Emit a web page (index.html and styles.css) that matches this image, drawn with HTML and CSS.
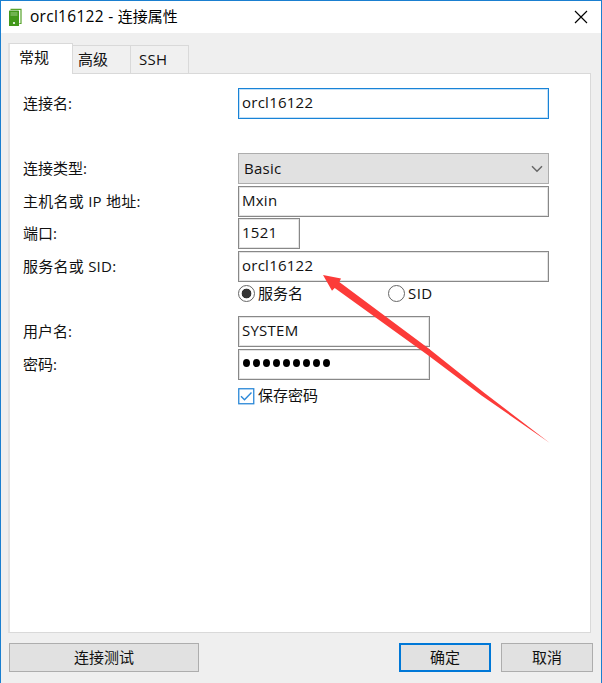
FILE: index.html
```html
<!DOCTYPE html>
<html lang="zh-CN">
<head>
<meta charset="utf-8">
<title>orcl16122 - 连接属性</title>
<link rel="stylesheet" href="styles.css">
</head>
<body>
<div class="window">
  <header class="titlebar">
    <svg class="app-icon" width="14" height="19" viewBox="0 0 14 19">
      <path d="M2.500 1.300h10.500v14.200h-1.600" fill="none" stroke="#57a32c" stroke-width="1.2"/>
      <rect x="1" y="2.500" width="10" height="15.500" rx=".6" fill="#43981b"/>
      <path d="M2.500 5h7M2.500 7h7" stroke="#a9d493" stroke-width=".9"/>
      <circle cx="6" cy="15" r="1.1" fill="#fff"/>
    </svg>
    <span class="title"><span class="latin">orcl16122 - </span>连接属性</span>
    <svg class="close" width="14" height="14" viewBox="0 0 14 14"><path d="M1 1l12 12M13 1L1 13" stroke="#000" stroke-width="1.15"/></svg>
  </header>
  <nav class="tabs">
    <div class="tab active">常规</div>
    <div class="tab advanced">高级</div>
    <div class="tab ssh">SSH</div>
  </nav>
  <main class="panel">
    <div class="row name-row"><label>连接名:</label><div class="field focused"><span>orcl16122</span></div></div>
    <div class="row"><label>连接类型:</label><div class="field select"><span>Basic</span>
      <svg width="12" height="8" viewBox="0 0 12 8"><path d="M1 1.2l5 5 5-5" fill="none" stroke="#666" stroke-width="1.5"/></svg></div></div>
    <div class="row"><label class="spaced">主机名或 IP 地址:</label><div class="field"><span>Mxin</span></div></div>
    <div class="row"><label>端口:</label><div class="field port"><span>1521</span></div></div>
    <div class="row"><label class="spaced">服务名或 SID:</label><div class="field"><span>orcl16122</span></div></div>
    <div class="options">
      <div class="option service"><i class="radio checked"></i><span>服务名</span></div>
      <div class="option sid"><i class="radio"></i><span>SID</span></div>
    </div>
    <div class="row"><label>用户名:</label><div class="field short"><span>SYSTEM</span></div></div>
    <div class="row"><label>密码:</label><div class="field short dots"><i></i><i></i><i></i><i></i><i></i><i></i><i></i><i></i><i></i></div></div>
    <div class="options save">
      <div class="option"><svg width="17" height="17" viewBox="0 0 17 17"><rect x=".75" y=".75" width="15" height="15" fill="#fff" stroke="#2b88d8" stroke-width="1.3"/><path d="M3 8.2l3.5 3.5 7-7.2" fill="none" stroke="#2b88d8" stroke-width="1.4"/></svg><span>保存密码</span></div>
    </div>
  </main>
  <footer class="actions">
    <div class="button test">连接测试</div>
    <div class="button ok">确定</div>
    <div class="button">取消</div>
  </footer>
  <svg class="arrow" width="230" height="172" viewBox="0 0 230 172"><path d="M2 2L20 5.500L18.300 9L107 75L163.500 120L228.800 170L160.500 122.500L107 82.300L13.700 15L11 17.700Z" fill="#fc3b39"/></svg>
</div>
</body>
</html>
```
FILE: styles.css
```css
* { box-sizing: border-box; }
body {
  margin: 0;
  font: 15px/20px "Open Sans", "Noto Sans CJK SC", sans-serif;
  color: #111;
}
.window {
  position: relative;
  width: 602px;
  height: 683px;
  overflow: hidden;
  background: #efefef;
  border: 1px solid #1a7fd0;
  border-bottom: 0;
}
.titlebar {
  display: flex;
  align-items: center;
  height: 32px;
  padding: 0 13px 0 7px;
  background: #fff;
}
.title { margin: -2px 0 0 8px; color: #000; white-space: nowrap; }
.latin { font-size: 15.500px; letter-spacing: .28px; }
.close { margin-left: auto; }
.tabs {
  display: flex;
  align-items: flex-end;
  height: 40px;
  padding-left: 7px;
}
.tab {
  height: 28px;
  padding: 3px 0 0 5px;
  border: 1px solid #d9d9d9;
  border-left: 0;
  border-bottom: 0;
  background: #f0f0f0;
}
.tab.active {
  position: relative;
  width: 65px;
  height: 31px;
  margin-bottom: -1px;
  padding: 3px 0 0 9px;
  border-left: 2px solid #e1e1e1;
  background: #fff;
}
.advanced { width: 58px; }
.ssh { width: 58px; padding-left: 8px; letter-spacing: .3px; }
.panel {
  width: 583px;
  height: 560px;
  margin-left: 7px;
  padding: 14px 0 0 13px;
  background: #fff;
  border: 1px solid #d9d9d9;
  border-left: 2px solid #e1e1e1;
}
.row { display: flex; height: 32.5px; }
.row label { width: 215px; padding-top: 5px; white-space: nowrap; }
.row .spaced { letter-spacing: .25px; }
.name-row { height: 65px; }
.field {
  display: flex;
  width: 311px;
  height: 31px;
  padding: 3px 0 0 3px;
  border: 1px solid #888;
  box-shadow: inset 0 0 0 1px #e3e3e3;
  background: #fff;
  letter-spacing: .25px;
}
.focused { border-color: #1883d7; box-shadow: inset 0 0 0 1px #c5e1f7; }
.select {
  justify-content: space-between;
  padding: 4px 5px 0 5px;
  background: #e1e1e1;
  border-color: #adadad;
  box-shadow: none;
}
.select svg { margin-top: 7px; }
.port { width: 62px; }
.short { width: 192px; }
.dots { align-items: center; gap: 3px; padding: 0 0 2px 4px; }
.dots i { width: 7px; height: 8px; border-radius: 50%; background: #000; }
.options { display: flex; height: 33px; padding: 0 0 0 215px; }
.option { display: flex; align-items: flex-start; gap: 3px; }
.service { width: 150px; }
.sid { letter-spacing: .4px; }
.radio {
  width: 17px;
  height: 17px;
  margin-top: 2px;
  border: 1.500px solid #666;
  border-radius: 50%;
  background: #fff;
}
.radio.checked { background: radial-gradient(circle, #333 4.500px, #fff 5.200px); }
.save { padding-top: 4px; }
.save svg { margin-top: 3px; }
.actions { display: flex; padding: 10px 8px 0 8px; }
.button {
  width: 92px;
  height: 29px;
  line-height: 27px;
  text-align: center;
  border: 1px solid #adadad;
  background: #e1e1e1;
}
.test { width: 190px; margin-right: auto; }
.ok { border: 2px solid #0078d7; line-height: 25px; margin-right: 10px; }
.arrow { position: absolute; left: 320px; top: 272px; }
```
